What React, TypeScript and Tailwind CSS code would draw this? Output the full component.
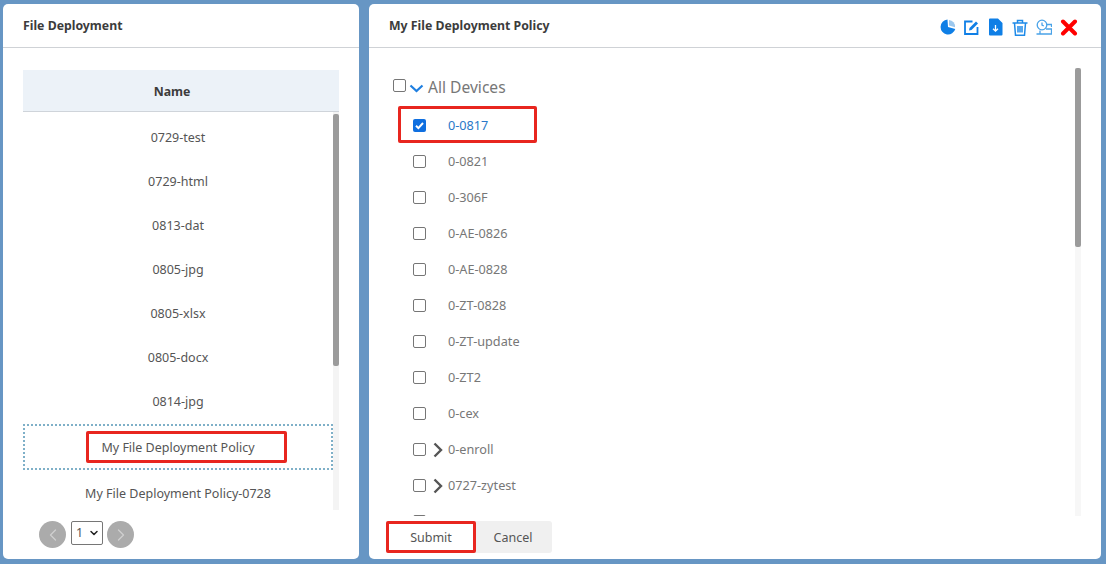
import { ChevronDown, ChevronLeft, ChevronRight } from 'lucide-react'

const policies = ['0729-test', '0729-html', '0813-dat', '0805-jpg', '0805-xlsx', '0805-docx', '0814-jpg']

const devices = [
  { name: '0-0821' },
  { name: '0-306F' },
  { name: '0-AE-0826' },
  { name: '0-AE-0828' },
  { name: '0-ZT-0828' },
  { name: '0-ZT-update' },
  { name: '0-ZT2' },
  { name: '0-cex' },
  { name: '0-enroll', children: true },
  { name: '0727-zytest', children: true },
]

function Box() {
  return <span className="mb-[2px] block h-[13px] w-[13px] shrink-0 rounded-[2px] border border-[#767676] bg-white" />
}

function HeaderIcons() {
  return (
    <div className="mt-[3px] flex items-center gap-[8px]">
      <svg width="16" height="16" viewBox="0 0 16 16">
        <path d="M7.5 0.5a7.5 7.5 0 1 0 7.8 9.5L8 8z" fill="#0f7fe6" />
        <path d="M9 1a6.5 6.5 0 0 1 6 7.2L9 6.5z" fill="#9cc8ee" />
      </svg>
      <svg width="15" height="15" viewBox="0 0 15 15" fill="none">
        <path d="M8.5 1.5H1v12.5h12.5V7" stroke="#0f7fe6" strokeWidth="1.8" />
        <path d="M5 10.5l.5-2.5 6.5-6.5 2 2-6.5 6.5z" fill="#0f7fe6" />
      </svg>
      <svg width="15" height="18" viewBox="0 0 15 18" className="mr-px ml-px">
        <path d="M2 0.5h8l4.5 4.5v11.5a1 1 0 0 1-1 1H2a1 1 0 0 1-1-1V1.5a1 1 0 0 1 1-1z" fill="#0f7fe6" />
        <path d="M7.5 7v6M5 10.8l2.5 2.4 2.5-2.4" stroke="#fff" strokeWidth="1.3" fill="none" />
      </svg>
      <svg width="16" height="17" viewBox="0 0 16 17" fill="none" stroke="#1e8ae8" strokeWidth="1.5">
        <path d="M0.5 4h15M5.5 4V1.5h5V4M2.5 4l1 12.2h9l1-12.2" />
        <path d="M6 7v6.5M8 7v6.5M10 7v6.5" />
      </svg>
      <svg width="16" height="16" viewBox="0 0 16 16" fill="none" stroke="#4aa3e8" strokeWidth="1.3">
        <circle cx="6" cy="6" r="4.8" />
        <path d="M6 3.5V6l1.8 1" />
        <path d="M10.5 5.5h5v2.5M0.5 15h15V10H10M4 11.5V15" />
      </svg>
      <svg width="18" height="17" viewBox="0 0 18 17">
        <path d="M3 2.5l12 12M15 2.5l-12 12" stroke="#f00" strokeWidth="4" strokeLinecap="round" />
      </svg>
    </div>
  )
}

function PagerButton({ children }: { children: React.ReactNode }) {
  return (
    <span className="flex h-[27px] w-[27px] items-center justify-center rounded-full bg-[#ababab] text-[#cfcfcf]">
      {children}
    </span>
  )
}

export default function App() {
  return (
    <div
      className="flex h-[564px] w-[1106px] gap-[10px] overflow-hidden bg-[#6796c4] pt-[4px] pr-[5px] pb-[5px] pl-[3px] text-[12.5px] text-[#555]"
      style={{ fontFamily: '"Noto Sans", "Open Sans", sans-serif' }}
    >
      <section className="flex h-[555px] w-[356px] shrink-0 flex-col rounded-[5px] bg-white">
        <header className="flex h-[44px] shrink-0 items-center border-b border-[#cfd2d6] pt-[2px] pl-[20px] text-[12.3px] font-bold text-[#3c3c3c]">
          File Deployment
        </header>
        <div className="mt-[22px] ml-[20px] w-[316px]">
          <div className="flex h-[42px] items-center justify-center border-b border-[#cfd4da] bg-[#ecf2f8] pt-[3px] pr-[18px] text-[12.3px] font-bold text-[#3c3c3c]">
            Name
          </div>
          <div className="relative h-[398px] overflow-hidden pt-[3px] pr-[6px]">
            {policies.map((p) => (
              <div key={p} className="flex h-[44px] items-center justify-center pt-[2px]">
                {p}
              </div>
            ))}
            <div className="relative mt-px flex h-[46px] items-center justify-center border-2 border-dotted border-[#7fb0c8] pt-[3px]">
              My File Deployment Policy
              <span className="absolute top-[5px] left-[61px] h-[32px] w-[201px] rounded-[2px] border-[3px] border-[#e8261f]" />
            </div>
            <div className="mt-[1px] flex h-[44px] items-center justify-center pt-[2px]">
              My File Deployment Policy-0728
            </div>
            <div className="absolute top-0 right-0 bottom-0 w-[6px] bg-[#f4f4f4]">
              <div className="mt-[2px] h-[252px] rounded-[2px] bg-[#9b9b9b]" />
            </div>
          </div>
        </div>
        <div className="mt-[11px] ml-[36px] flex items-center">
          <PagerButton>
            <ChevronLeft size={20} strokeWidth={1.6} />
          </PagerButton>
          <span className="mr-[4px] mb-[3px] ml-[5px] flex h-[24px] w-[32px] items-center justify-between rounded-[2px] border border-[#767676] pr-[2px] pl-[4px] text-[#555]">
            1
            <ChevronDown size={12} strokeWidth={3} className="text-[#222]" />
          </span>
          <PagerButton>
            <ChevronRight size={20} strokeWidth={1.6} />
          </PagerButton>
        </div>
      </section>

      <section className="flex h-[555px] min-w-0 flex-1 flex-col rounded-[5px] bg-white text-[12.7px]">
        <header className="flex h-[44px] shrink-0 items-center justify-between border-b border-[#cfd2d6] pr-[23px] pl-[20px]">
          <span className="pt-[2px] text-[12.3px] font-bold text-[#3c3c3c]">My File Deployment Policy</span>
          <HeaderIcons />
        </header>
        <div className="relative h-[468px] shrink-0 overflow-hidden">
          <div className="absolute top-[20px] right-[20px] bottom-0 w-[6px] bg-[#f7f7f7]">
            <div className="h-[179px] rounded-[2px] bg-[#9b9b9b]" />
          </div>
          <div className="mt-[28px] ml-[24px] flex h-[24px] items-center">
            <span className="mb-[3px]">
              <Box />
            </span>
            <svg width="15" height="9" viewBox="0 0 15 9" fill="none" className="ml-[3px]">
              <path d="M1.5 1.5L7.5 7l6-5.5" stroke="#1f7fe0" strokeWidth="2.2" />
            </svg>
            <span className="ml-[4px] text-[15.6px] text-[#777]">All Devices</span>
          </div>
          <div className="relative mt-[8px] ml-[44px] flex h-[36px] items-center">
            <span className="mb-[2px] flex h-[13px] w-[13px] items-center justify-center rounded-[2px] bg-[#0f6fe0]">
              <svg width="11" height="11" viewBox="0 0 11 11" fill="none">
                <path d="M2 5.7l2.4 2.4L9 3" stroke="#fff" strokeWidth="2" />
              </svg>
            </span>
            <span className="ml-[22px] text-[#2a78c8]">0-0817</span>
            <span className="absolute top-[-2px] left-[-15px] h-[37px] w-[139px] rounded-[2px] border-[3px] border-[#e8261f]" />
          </div>
          {devices.map((d) => (
            <div key={d.name} className="ml-[44px] flex h-[36px] items-center">
              <Box />
              {d.children ? (
                <svg width="10" height="16" viewBox="0 0 10 16" fill="none" className="mr-[5px] ml-[7px] shrink-0">
                  <path d="M1.5 1.5L8 8l-6.5 6.5" stroke="#555" strokeWidth="2.4" />
                </svg>
              ) : (
                <span className="w-[22px]" />
              )}
              <span className="text-[#777]">{d.name}</span>
            </div>
          ))}
          <div className="ml-[44px] flex h-[36px] items-center">
            <Box />
          </div>
        </div>
        <div className="mt-[5px] ml-[17px] flex h-[32px] w-[166px] rounded-[3px] bg-[#f0f0f0] text-[12.5px] text-[#555]">
          <span className="flex h-full w-[90px] items-center justify-center rounded-[2px] border-[3px] border-[#e8261f] bg-white pt-[2px]">
            Submit
          </span>
          <span className="flex flex-1 items-center justify-center pt-[2px] pr-[2px]">Cancel</span>
        </div>
      </section>
    </div>
  )
}
